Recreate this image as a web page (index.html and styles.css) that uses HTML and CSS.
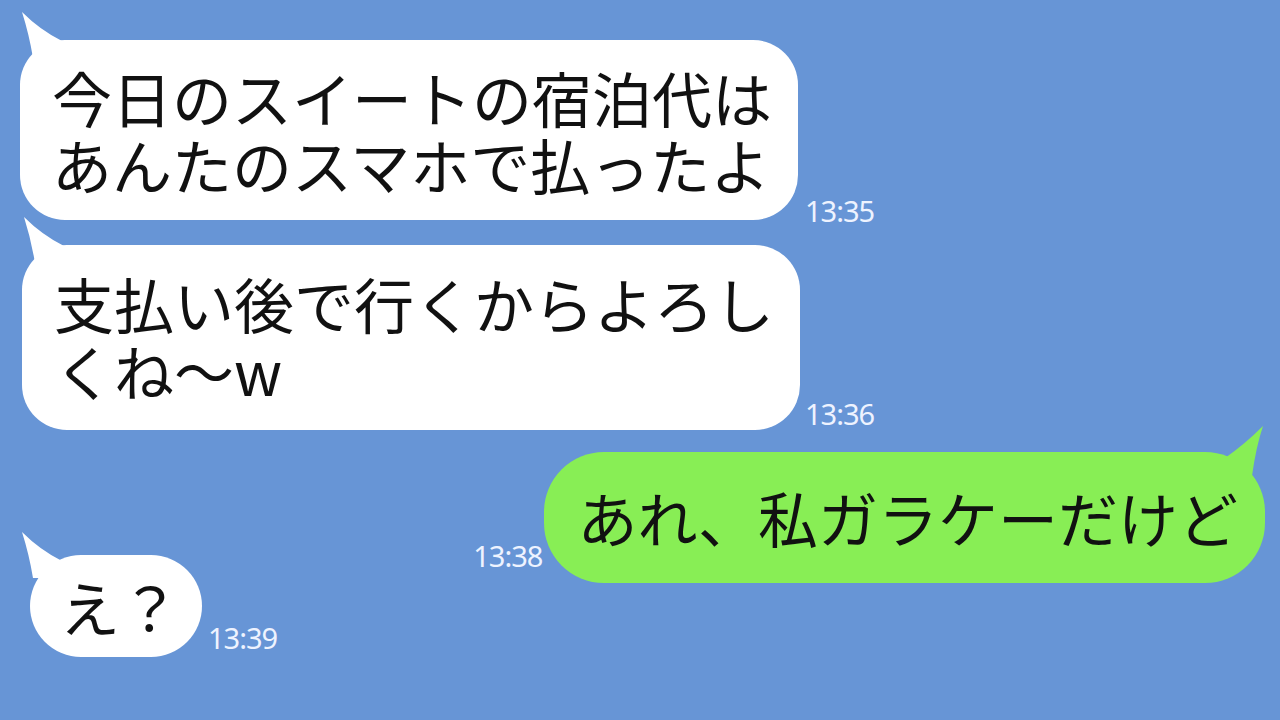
FILE: index.html
```html
<!DOCTYPE html>
<html lang="ja">
<head>
    <meta charset="UTF-8">
    <title>トーク</title>
    <link rel="stylesheet" href="styles.css">
</head>
<body>

<div class="chat">

    <div class="row row-in first">
        <div class="bubble white b1">
            <svg class="tail tail-left" width="45" height="50" viewBox="0 0 45 50">
                <path d="M2 2 Q9 24 13 48 L42 48 L42 31 Q20 20 2 2 Z" fill="#fff"/>
            </svg>
            <span class="line">今日のスイートの宿泊代は</span>
            <span class="line">あんたのスマホで払ったよ</span>
        </div>
        <span class="time t1">13:35</span>
    </div>

    <div class="row row-in second">
        <div class="bubble white b2">
            <svg class="tail tail-left" width="45" height="50" viewBox="0 0 45 50">
                <path d="M2 2 Q9 24 13 48 L42 48 L42 31 Q20 20 2 2 Z" fill="#fff"/>
            </svg>
            <span class="line">支払い後で行くからよろし</span>
            <span class="line">くね～w</span>
        </div>
        <span class="time t2">13:36</span>
    </div>

    <div class="row row-out third">
        <span class="time t3">13:38</span>
        <div class="bubble green b3">
            <svg class="tail tail-right" width="45" height="55" viewBox="0 0 45 55">
                <path d="M43 4 Q25 22 5 36 L5 54 L32 54 Q36 25 43 4 Z" fill="#88ee55"/>
            </svg>
            <span class="line">あれ、私ガラケーだけど</span>
        </div>
    </div>

    <div class="row row-in fourth">
        <div class="bubble white b4">
            <svg class="tail tail-left small" width="45" height="50" viewBox="0 0 45 50">
                <path d="M2 2 Q9 24 13 48 L42 48 L42 31 Q20 20 2 2 Z" fill="#fff"/>
            </svg>
            <span class="line">え？</span>
        </div>
        <span class="time t4">13:39</span>
    </div>

</div>

</body>
</html>
```

FILE: styles.css
```css
body {
    margin: 0;
    width: 1280px;
    height: 720px;
    overflow: hidden;
    background-color: #6795d6;
    font-family: "Noto Sans CJK JP", "Noto Sans", sans-serif;
}

.chat {
    display: flex;
    flex-direction: column;
    padding: 0 15px 0 20px;
}

.row {
    display: flex;
    align-items: flex-end;
}

.row-out {
    justify-content: flex-end;
}

.first {
    margin-top: 40px;
}

.second {
    margin-top: 25px;
}

.third {
    margin-top: 22px;
}

/* the last reply starts before the green bubble ends */
.fourth {
    margin-top: -28px;
}

.bubble {
    position: relative;
    display: flex;
    flex-direction: column;
    font-size: 60px;
    color: #111;
    white-space: nowrap;
    border-radius: 45px;
}

.line {
    display: block;
    height: 67px;
    line-height: 67px;
}

.white {
    background-color: #fff;
}

.green {
    background-color: #88ee55;
    border-radius: 60px;
}

.b1 {
    padding: 23px 26px 23px 32px;
}

.b2 {
    margin-left: 2px;
    padding: 24px 26px 27px 32px;
}

.b3 .line {
    height: 66px;
    line-height: 66px;
}

.b3 {
    padding: 32px 27px 33px 33px;
}

.b4 .line {
    height: 66px;
    line-height: 66px;
}

.b4 {
    margin-left: 10px;
    padding: 18px 22px 18px 30px;
    border-radius: 51px;
}

.tail {
    position: absolute;
    display: block;
}

.tail-left {
    left: 0;
    top: -30px;
}

.tail-left.small {
    left: -10px;
    top: -25px;
}

.tail-right {
    right: 0;
    top: -30px;
}

.time {
    font-family: "Noto Sans", sans-serif;
    font-size: 29px;
    line-height: 1;
    letter-spacing: -1px;
    color: #eef3ff;
}

.t1 {
    margin: 0 0 -5px 7px;
}

.t2 {
    margin: 0 0 2px 5px;
}

.t3 {
    margin: 0 2px 13px 0;
}

.t4 {
    margin: 0 0 5px 6px;
}
```
